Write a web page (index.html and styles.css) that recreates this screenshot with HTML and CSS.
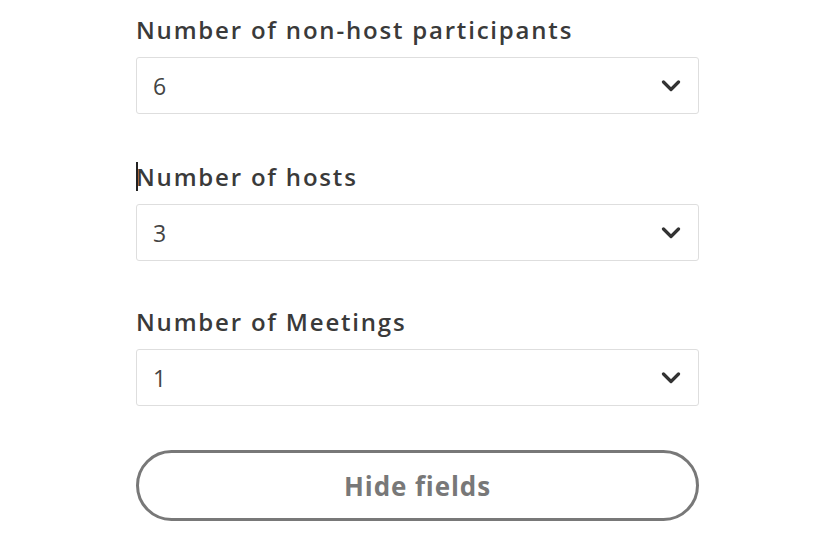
FILE: index.html
```html
<!DOCTYPE html>
<html lang="en">
<head>
    <meta charset="UTF-8">
    <meta name="viewport" content="width=device-width, initial-scale=1.0">
    <title>Meeting fields</title>
    <link rel="stylesheet" href="styles.css">
</head>
<body>
    <div class="container">
        <div class="form-group">
            <label for="participants">Number of non-host participants</label>
            <div class="select">
                <span class="value">6</span>
                <svg class="chevron" width="20" height="12" viewBox="0 0 20 12"><path d="M2.5 2 L10 9.5 L17.5 2" fill="none" stroke="#333" stroke-width="3.2" stroke-linecap="round" stroke-linejoin="round"/></svg>
            </div>
        </div>

        <div class="form-group">
            <label for="hosts"><span class="caret"></span>Number of hosts</label>
            <div class="select">
                <span class="value">3</span>
                <svg class="chevron" width="20" height="12" viewBox="0 0 20 12"><path d="M2.5 2 L10 9.5 L17.5 2" fill="none" stroke="#333" stroke-width="3.2" stroke-linecap="round" stroke-linejoin="round"/></svg>
            </div>
        </div>

        <div class="form-group">
            <label for="meetings">Number of Meetings</label>
            <div class="select">
                <span class="value">1</span>
                <svg class="chevron" width="20" height="12" viewBox="0 0 20 12"><path d="M2.5 2 L10 9.5 L17.5 2" fill="none" stroke="#333" stroke-width="3.2" stroke-linecap="round" stroke-linejoin="round"/></svg>
            </div>
        </div>

        <button type="button" class="hide-btn">Hide fields</button>
    </div>
</body>
</html>
```

FILE: styles.css
```css
:root {
    --text-color: #3a3a3a;
    --value-color: #444444;
    --border-color: #dedede;
    --button-color: #787878;
    --white: #ffffff;
    --font-family: 'Open Sans', 'Noto Sans', sans-serif;
}

* {
    margin: 0;
    padding: 0;
    box-sizing: border-box;
}

body {
    background: var(--white);
    font-family: var(--font-family);
    color: var(--text-color);
}

.container {
    width: 563px;
    margin-left: 136px;
    padding-top: 14px;
}

.form-group {
    margin-bottom: 47px;
}

.form-group:nth-child(2) {
    margin-bottom: 45px;
}

.form-group:last-of-type {
    margin-bottom: 0;
}

label {
    display: block;
    position: relative;
    font-size: 24px;
    line-height: 32px;
    font-weight: 600;
    letter-spacing: 1.8px;
    margin-bottom: 11px;
}

.caret {
    position: absolute;
    left: 0;
    top: 1px;
    width: 2px;
    height: 29px;
    background: #222;
}

.select {
    display: flex;
    align-items: center;
    justify-content: space-between;
    height: 57px;
    padding: 0 17px 0 16px;
    border: 1px solid var(--border-color);
    border-radius: 3px;
}

.value {
    font-size: 23px;
    color: var(--value-color);
}

.hide-btn {
    display: block;
    width: 100%;
    height: 71px;
    margin-top: 44px;
    background: var(--white);
    border: 3px solid var(--button-color);
    border-radius: 36px;
    color: var(--button-color);
    font-family: var(--font-family);
    font-size: 26px;
    font-weight: 700;
    letter-spacing: 0.9px;
    cursor: pointer;
}
```
